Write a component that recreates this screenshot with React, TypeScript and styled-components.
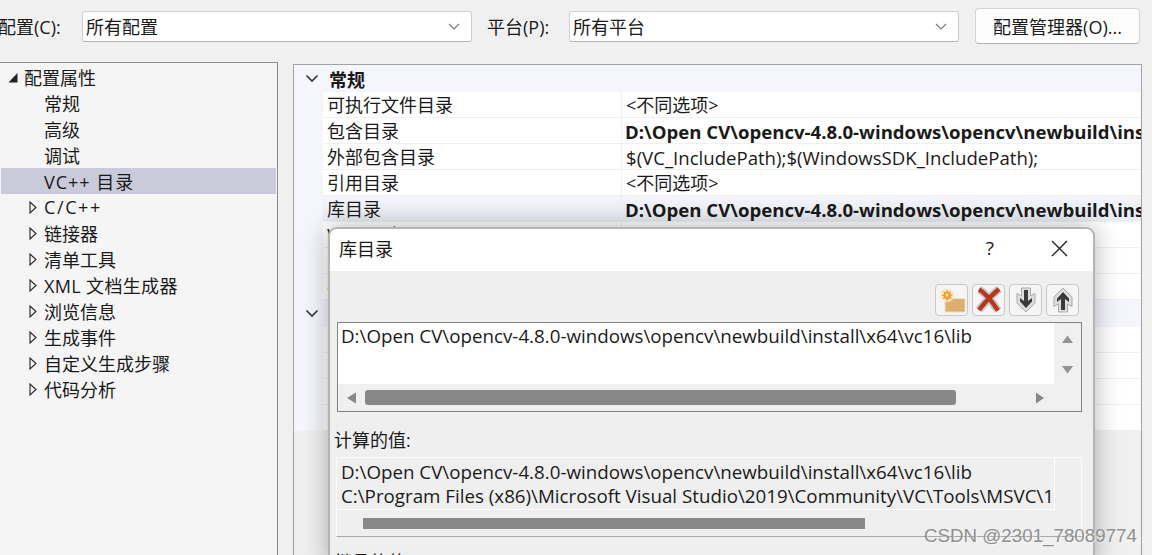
import styled, { createGlobalStyle } from "styled-components";

const Global = createGlobalStyle`
  html, body { margin: 0; padding: 0; }
  body {
    width: 1152px;
    height: 555px;
    overflow: hidden;
    background: #f0f0f0;
    color: #1a1a1a;
    font-family: "Open Sans", "Noto Sans CJK SC", sans-serif;
    font-size: 18px;
  }
`;

const Page = styled.div`
  position: relative;
  width: 1152px;
  height: 555px;
  overflow: hidden;
  background: #f0f0f0;
`;

const Toolbar = styled.div`
  display: flex;
  align-items: center;
  height: 62px;
  padding: 0 12px 10px 0;
  box-sizing: border-box;
`;

const ToolLabel = styled.span<{ $w: number; $ml?: number }>`
  width: ${(p) => p.$w}px;
  margin-left: ${(p) => p.$ml ?? 0}px;
  flex: none;
  white-space: nowrap;
`;

const Combo = styled.div`
  display: flex;
  align-items: center;
  justify-content: space-between;
  width: 390px;
  height: 31px;
  box-sizing: border-box;
  padding: 0 11px 0 3px;
  background: #fff;
  border: 1px solid #d0d0d0;
  border-bottom-color: #b4b4b4;
  border-radius: 3px;
  flex: none;
`;

const ManagerButton = styled.div`
  display: flex;
  align-items: center;
  justify-content: center;
  width: 165px;
  height: 36px;
  margin-left: 16px;
  box-sizing: border-box;
  background: #fdfdfd;
  border: 1px solid #d4d4d4;
  border-bottom-color: #b4b4b4;
  border-radius: 4px;
  flex: none;
`;

const Main = styled.div`
  display: flex;
  height: 493px;
`;

const TreePanel = styled.div`
  width: 278px;
  box-sizing: border-box;
  background: #f5f5f5;
  border-top: 1px solid #8b8b96;
  border-right: 1px solid #8b8b96;
  padding: 1px 1px 0;
  flex: none;
`;

const TreeRow = styled.div<{ $indent: number; $selected?: boolean }>`
  display: flex;
  align-items: center;
  height: 26px;
  padding-left: ${(p) => p.$indent}px;
  background: ${(p) => (p.$selected ? "#c9cbdb" : "transparent")};
  white-space: nowrap;
`;

const RootArrow = styled.svg`
  width: 10px;
  height: 11px;
  margin-right: 6px;
  flex: none;
`;

const TreeArrow = styled.svg`
  width: 8px;
  height: 13px;
  margin-right: 7px;
  flex: none;
`;

const TreeLabel = styled.span<{ $spread?: number }>`
  letter-spacing: ${(p) => p.$spread ?? 0}px;
`;

const GridPanel = styled.div`
  position: relative;
  width: 849px;
  margin: 2px 0 0 15px;
  box-sizing: border-box;
  background: #f4f6fb;
  border-top: 1px solid #a2a2a2;
  border-left: 1px solid #a2a2a2;
  border-right: 1px solid #a2a2a2;
  flex: none;
  overflow: hidden;
`;

const GroupHead = styled.div`
  display: flex;
  align-items: center;
  height: 27px;
  font-weight: 700;
  padding-left: 11px;
`;

const Chevron = styled.svg`
  width: 14px;
  height: 9px;
  margin-right: 10px;
  flex: none;
`;

const GridRow = styled.div<{ $active?: boolean }>`
  display: flex;
  height: 26px;
  margin-left: 29px;
  box-sizing: border-box;
  background: ${(p) => (p.$active ? "linear-gradient(#f3f5fa, #e9ecf2)" : "#fff")};
  border-bottom: 1px solid #eef0f6;
  white-space: nowrap;
  line-height: 27px;
`;

const NameCell = styled.div`
  width: 299px;
  padding-left: 4px;
  box-sizing: border-box;
  border-right: 1px solid #f0f1f6;
  flex: none;
`;

const ValueCell = styled.div<{ $bold?: boolean; $latin?: boolean }>`
  padding-left: ${(p) => (p.$bold ? 3 : 4)}px;
  font-size: ${(p) => (p.$latin ? 18.6 : 18)}px;
  font-weight: ${(p) => (p.$bold ? 700 : 400)};
  overflow: hidden;
`;

const LowerArea = styled.div`
  height: 130px;
  background: #f0f0f0;
`;

const Dialog = styled.div`
  position: absolute;
  left: 328px;
  top: 227px;
  width: 767px;
  height: 340px;
  box-sizing: border-box;
  background: #efefef;
  border: 2px solid #b4b4b4;
  border-radius: 9px 9px 0 0;
  box-shadow: 0 0 26px rgba(0, 0, 0, 0.3);
  overflow: hidden;
`;

const DialogTitle = styled.div`
  display: flex;
  align-items: center;
  height: 42px;
  box-sizing: border-box;
  padding: 0 25px 4px 9px;
  background: #fff;
`;

const TitleText = styled.span`
  flex: 1;
`;

const HelpMark = styled.span`
  margin-right: 57px;
  font-size: 19px;
`;

const DialogBody = styled.div`
  padding: 13px 12px 0 5px;
`;

const ButtonRow = styled.div`
  display: flex;
  justify-content: flex-end;
  gap: 4px;
  height: 32px;
  padding-right: 2px;
`;

const IconButton = styled.div`
  display: flex;
  align-items: center;
  justify-content: center;
  width: 33px;
  height: 32px;
  box-sizing: border-box;
  background: #f5f5f5;
  border: 1px solid #c8c8c8;
  border-radius: 4px;
`;

const EditBox = styled.div`
  display: grid;
  grid-template-columns: 1fr 27px;
  grid-template-rows: 61px 1fr;
  width: 745px;
  height: 90px;
  margin: 6px 0 0 2px;
  box-sizing: border-box;
  background: #f0f0f0;
  border: 1px solid #7d838b;
`;

const PathText = styled.div`
  font-size: 18.75px;
  white-space: nowrap;
`;

const EditText = styled(PathText)`
  padding-left: 3px;
  background: #fff;
  line-height: 26px;
`;

const VScroll = styled.div`
  display: flex;
  flex-direction: column;
  align-items: center;
  justify-content: space-between;
  padding: 10px 0 8px;
`;

const HScroll = styled.div`
  grid-column: 1 / 3;
  display: flex;
  align-items: center;
  justify-content: space-between;
  padding: 0 35px 0 8px;
`;

const HThumb = styled.div<{ $w: number }>`
  width: ${(p) => p.$w}px;
  height: 15px;
  margin: 0 auto 0 6px;
  background: #888;
  border-radius: 3px;
`;

const ScrollArrow = styled.svg`
  width: 13px;
  height: 12px;
  flex: none;
`;

const CalcLabel = styled.div`
  margin: 15px 0 0 -1px;
  height: 30px;
  line-height: 26px;
`;

const CalcBox = styled.div`
  width: 746px;
  height: 80px;
  margin-left: 1px;
  box-sizing: border-box;
  border: 1px solid #fafafa;
  border-bottom-color: #a8a8a8;
`;

const CalcLines = styled(PathText)`
  width: 718px;
  height: 52px;
  padding: 2px 0 0 4px;
  box-sizing: border-box;
  border-right: 1px solid #fff;
  border-bottom: 1px solid #fff;
  line-height: 24px;
  overflow: hidden;
`;

const CalcThumb = styled.div`
  width: 502px;
  height: 11px;
  margin: 8px 0 0 26px;
  background: #888;
`;

const InheritLabel = styled.div`
  margin: 12px 0 0 -1px;
  line-height: 26px;
`;

const Watermark = styled.div`
  position: absolute;
  left: 924px;
  top: 525px;
  font-family: "Liberation Sans", sans-serif;
  font-size: 18.75px;
  color: #8f8f8f;
  text-shadow: 1px 1px 0 rgba(255, 255, 255, 0.6);
  white-space: nowrap;
`;

const PathOne = "D:\\Open CV\\opencv-4.8.0-windows\\opencv\\newbuild\\install\\x64\\vc16\\lib";
const PathTwo = "C:\\Program Files (x86)\\Microsoft Visual Studio\\2019\\Community\\VC\\Tools\\MSVC\\14.29";
const PathCut = "D:\\Open CV\\opencv-4.8.0-windows\\opencv\\newbuild\\install\\x64\\vc16\\include";

const treeItems: { label: string; arrow?: boolean; selected?: boolean; spread?: number }[] = [
  { label: "常规" },
  { label: "高级" },
  { label: "调试" },
  { label: "VC++ 目录", selected: true, spread: 1 },
  { label: "C/C++", arrow: true, spread: 1.6 },
  { label: "链接器", arrow: true },
  { label: "清单工具", arrow: true },
  { label: "XML 文档生成器", arrow: true, spread: 0.35 },
  { label: "浏览信息", arrow: true },
  { label: "生成事件", arrow: true },
  { label: "自定义生成步骤", arrow: true },
  { label: "代码分析", arrow: true },
];

const gridRows: { name: string; value: string; bold?: boolean; active?: boolean; latin?: boolean }[] = [
  { name: "可执行文件目录", value: "<不同选项>" },
  { name: "包含目录", value: PathCut, bold: true, latin: true },
  { name: "外部包含目录", value: "$(VC_IncludePath);$(WindowsSDK_IncludePath);", latin: true },
  { name: "引用目录", value: "<不同选项>" },
  { name: "库目录", value: PathOne, bold: true, active: true, latin: true },
  { name: "WinRT 库目录", value: "$(WindowsSDK_MetadataPath);", latin: true },
  { name: "源目录", value: "" },
  { name: "排除目录", value: "" },
];

const ComboChevron = () => (
  <svg width="12" height="7" viewBox="0 0 12 7">
    <path d="M1 1l5 5 5-5" fill="none" stroke="#7a7a7a" strokeWidth="1.2" />
  </svg>
);

const GroupChevron = () => (
  <Chevron viewBox="0 0 14 9">
    <path d="M1.5 1.5L7 7l5.500-5.500" fill="none" stroke="#333" strokeWidth="1.6" />
  </Chevron>
);

const App = () => {
  return (
    <Page>
      <Global />
      <Toolbar>
        <ToolLabel $w={84} $ml={-2}>配置(C):</ToolLabel>
        <Combo>
          <span>所有配置</span>
          <ComboChevron />
        </Combo>
        <ToolLabel $w={82} $ml={15}>平台(P):</ToolLabel>
        <Combo>
          <span>所有平台</span>
          <ComboChevron />
        </Combo>
        <ManagerButton>配置管理器(O)...</ManagerButton>
      </Toolbar>

      <Main>
        <TreePanel>
          <TreeRow $indent={7}>
            <RootArrow viewBox="0 0 10 11">
              <path d="M0.500 10.500h9V1z" fill="#222" />
            </RootArrow>
            <TreeLabel>配置属性</TreeLabel>
          </TreeRow>
          {treeItems.map((item) => (
            <TreeRow key={item.label} $indent={item.arrow ? 28 : 43} $selected={item.selected}>
              {item.arrow && (
                <TreeArrow viewBox="0 0 8 13">
                  <path d="M1 1v11l6-5.500z" fill="none" stroke="#222" strokeWidth="1.1" />
                </TreeArrow>
              )}
              <TreeLabel $spread={item.spread}>{item.label}</TreeLabel>
            </TreeRow>
          ))}
        </TreePanel>

        <GridPanel>
          <GroupHead>
            <GroupChevron />
            常规
          </GroupHead>
          {gridRows.map((row) => (
            <GridRow key={row.name} $active={row.active}>
              <NameCell>{row.name}</NameCell>
              <ValueCell $bold={row.bold} $latin={row.latin}>{row.value}</ValueCell>
            </GridRow>
          ))}
          <GroupHead>
            <GroupChevron />
          </GroupHead>
          {["a", "b", "c", "d"].map((key) => (
            <GridRow key={key} />
          ))}
          <LowerArea />
        </GridPanel>
      </Main>

      <Dialog>
        <DialogTitle>
          <TitleText>库目录</TitleText>
          <HelpMark>?</HelpMark>
          <svg width="17" height="17" viewBox="0 0 17 17">
            <path d="M1 1l15 15M16 1L1 16" stroke="#222" strokeWidth="1.4" fill="none" />
          </svg>
        </DialogTitle>
        <DialogBody>
          <ButtonRow>
            <IconButton>
              <svg width="30" height="28" viewBox="0 0 30 28">
                <path d="M8 10.500h6l2 2h12V26H8z" fill="#dcae6f" stroke="#eedcc0" strokeWidth="1" />
                <path d="M9 12.500h19" stroke="#f3e4cc" strokeWidth="1" />
                <circle cx="10" cy="9" r="7" fill="#f8e9cf" />
                <path d="M10 3.500l1.300 3 2.700-1.700-.8 3.100 3.100.9-2.800 1.500 1.500 2.700-3.100-.6L10 15l-1.400-2.600-2.800.6 1.200-2.800L4 8.900l3.100-.9-.8-3.100 2.500 1.700z" fill="#ef9f2a" />
                <circle cx="10" cy="9" r="1.500" fill="#f8e9cf" />
              </svg>
            </IconButton>
            <IconButton>
              <svg width="30" height="28" viewBox="0 0 30 28">
                <path d="M5 3.500c6 3 11 9 19 21M25 3c-6 5-14 13-20 21" fill="none" stroke="#c9c9c9" strokeWidth="8" />
                <path d="M5 3.500c6 3 11 9 19 21M25 3c-6 5-14 13-20 21" fill="none" stroke="#b5381e" strokeWidth="4.500" />
              </svg>
            </IconButton>
            <IconButton>
              <svg width="20" height="26" viewBox="0 0 20 26">
                <path d="M5.500 1h9v8l4.500-2.500V16l-9 9-9-9V6.500L5.500 9z" fill="#dedede" stroke="#ababab" strokeWidth="1" />
                <path d="M8 3h4v11l4-3v3.500L10 21l-6-6.500V11l4 3z" fill="#3a3a3a" />
              </svg>
            </IconButton>
            <IconButton>
              <svg width="20" height="26" viewBox="0 0 20 26">
                <path d="M5.500 25h9v-8l4.500 2.500V10l-9-9-9 9v9.500L5.500 17z" fill="#dedede" stroke="#ababab" strokeWidth="1" />
                <path d="M8 23h4V12l4 3v-3.500L10 5l-6 6.500V15l4-3z" fill="#3a3a3a" />
              </svg>
            </IconButton>
          </ButtonRow>

          <EditBox>
            <EditText>{PathOne}</EditText>
            <VScroll>
              <ScrollArrow viewBox="0 0 13 12">
                <path d="M1 10h11L6.500 2.500z" fill="#929292" />
              </ScrollArrow>
              <ScrollArrow viewBox="0 0 13 12">
                <path d="M1 2h11L6.500 9.500z" fill="#929292" />
              </ScrollArrow>
            </VScroll>
            <HScroll>
              <ScrollArrow viewBox="0 0 13 12">
                <path d="M10 .5v11L1 6z" fill="#888" />
              </ScrollArrow>
              <HThumb $w={591} />
              <ScrollArrow viewBox="0 0 13 12">
                <path d="M3 .5v11L11 6z" fill="#888" />
              </ScrollArrow>
            </HScroll>
          </EditBox>

          <CalcLabel>计算的值:</CalcLabel>
          <CalcBox>
            <CalcLines>
              {PathOne}
              <br />
              {PathTwo}
            </CalcLines>
            <CalcThumb />
          </CalcBox>
          <InheritLabel>继承的值:</InheritLabel>
        </DialogBody>
      </Dialog>

      <Watermark>CSDN @2301_78089774</Watermark>
    </Page>
  );
};

export default App;
